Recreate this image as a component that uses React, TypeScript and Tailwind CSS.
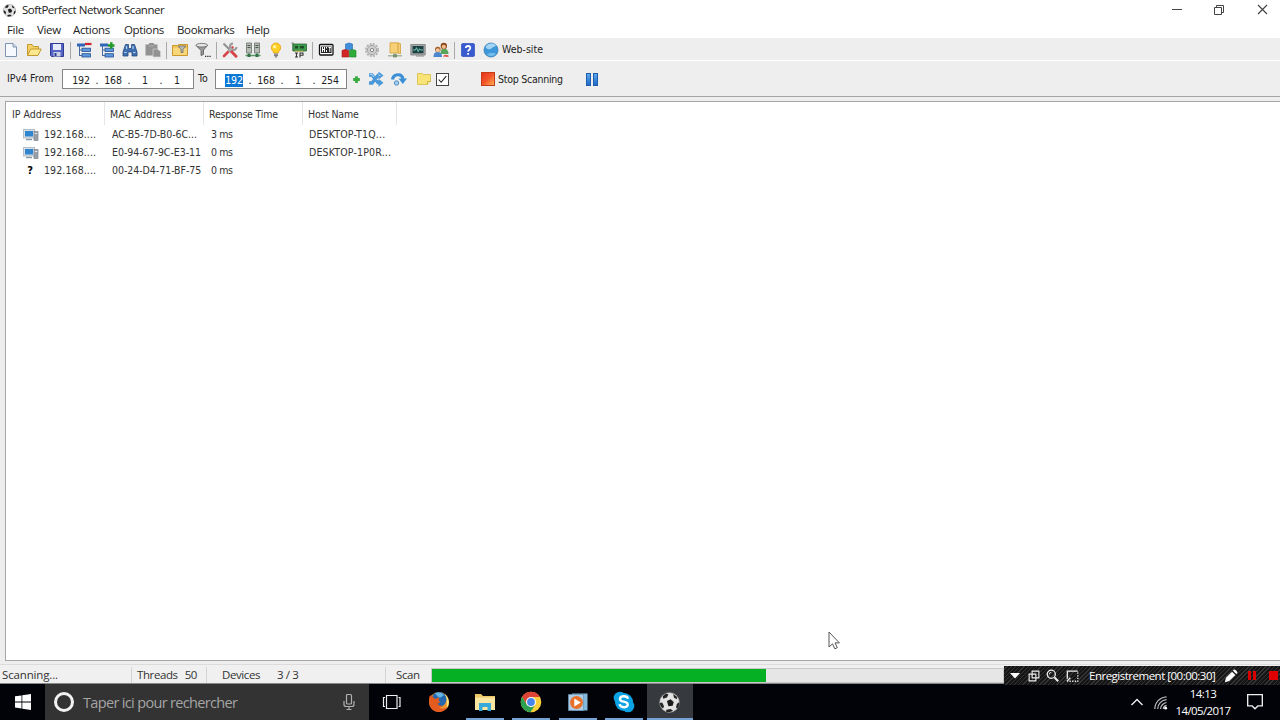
import type { ReactNode } from 'react';

type IconProps = { children: ReactNode; size?: number; className?: string };

function Icon({ children, size = 16, className = '' }: IconProps) {
  return (
    <svg viewBox="0 0 16 16" width={size} height={size} fill="none" className={`shrink-0 ${className}`}>
      {children}
    </svg>
  );
}

const tree = (
  <>
    <path d="M3.5 4v10M3.5 8h3M3.5 13.5h3" stroke="#4a6a9c" />
    <rect x="1" y="1.5" width="8" height="3" fill="#2f66b8" />
    <rect x="6" y="6.2" width="8.500" height="3.300" fill="#5e98dc" stroke="#244f93" strokeWidth=".8" />
    <rect x="6" y="11.700" width="8.500" height="3.300" fill="#5e98dc" stroke="#244f93" strokeWidth=".8" />
  </>
);

const toolbar: (ReactNode | 'sep')[] = [
  <Icon key="new">
    <path d="M2.5 1.5h7.5l3.5 3.5v9.5h-11z" fill="#f6faff" stroke="#7f93b3" />
    <path d="M10 1.5v3.500h3.500" fill="#cfdcf0" stroke="#7f93b3" />
  </Icon>,
  <Icon key="open">
    <path d="M1.5 13.5v-11h4.500l1.500 2h5v3" fill="#f4d268" stroke="#c29a2c" />
    <path d="M1.5 13.5l3.200-6.500h10.500l-3.200 6.500z" fill="#fce68e" stroke="#c29a2c" />
  </Icon>,
  <Icon key="save">
    <path d="M1.5 1.5h13v13h-12l-1-1z" fill="#5463c4" stroke="#2f3a93" />
    <rect x="4" y="2" width="8" height="6" fill="#e6ecfb" />
    <rect x="4.5" y="10" width="7" height="4.5" fill="#c9cfe4" />
    <rect x="5.5" y="11" width="2" height="3" fill="#2f3a93" />
  </Icon>,
  'sep',
  <Icon key="collapse">
    {tree}
    <path d="M9 2h6.500" stroke="#cf2430" strokeWidth="2.200" />
  </Icon>,
  <Icon key="expand">
    {tree}
    <path d="M9 3.500h6.500M12.300 .3v6.500" stroke="#1f9a26" strokeWidth="2.400" />
  </Icon>,
  <Icon key="find">
    <path d="M3.500 2.500h3v4h3v-4h3l2.500 7.500v4h-5v-4h-4v4h-5v-4z" fill="#3d6eaf" stroke="#27497d" strokeWidth=".8" />
    <path d="M2.200 10.500h2.500M11 10.500h2.500M4.500 4v3M11 4v3" stroke="#b8d3f2" strokeWidth="1.200" />
  </Icon>,
  <Icon key="paste">
    <path d="M.5 2.500h3l1-1.500h4l1 1.500h3v11h-12z" fill="#929292" />
    <path d="M8 7h4.500l3 2.500v5.500h-7.500z" fill="#929292" stroke="#d5d5d5" strokeWidth=".7" />
    <path d="M4 4h5" stroke="#b0b0b0" />
  </Icon>,
  'sep',
  <Icon key="folder-filter">
    <path d="M.5 3.500h5l1-1h9v11h-15z" fill="#f3c75e" stroke="#c9982b" />
    <path d="M1 6h14v7h-14z" fill="#f8d67a" />
    <path d="M6 4h8l-3 3.300v3.200h-2v-3.200z" fill="#b9b9b9" stroke="#6c6c6c" strokeWidth=".8" />
  </Icon>,
  <Icon key="filter">
    <path d="M1 3.500l5 5v5l2.500-1v-4.500l4-4.500z" fill="#9a9a9a" stroke="#555" strokeWidth=".8" />
    <ellipse cx="6.800" cy="3.200" rx="5.800" ry="1.800" fill="#e4e4e4" stroke="#666" strokeWidth=".8" />
    <path d="M10 14.300h1.300M12.200 14.300h1.300M14.400 14.300h1.300" stroke="#333" strokeWidth="1.200" />
  </Icon>,
  'sep',
  <Icon key="tools">
    <path d="M2 14l8.500-8.500" stroke="#d6454a" strokeWidth="2.600" strokeLinecap="round" />
    <path d="M11 1.500a3.300 3.300 0 1 0 3.500 3.500" stroke="#9a9a9a" strokeWidth="2" />
    <path d="M1.500 1.500l6.500 6.500" stroke="#909090" strokeWidth="2" />
    <path d="M8.500 8.500l5.500 5.700" stroke="#d6454a" strokeWidth="3" strokeLinecap="round" />
    <path d="M6.500 9.500l3.500-3.500" stroke="#a8a8a8" strokeWidth="2.600" />
  </Icon>,
  <Icon key="servers">
    <path d="M1.500 1h5v10h-5zM9.500 1h5v10h-5z" fill="#b6bcb6" stroke="#757c75" strokeWidth=".9" />
    <path d="M2.500 3.500h3M2.500 5.500h3M10.500 3.500h3M10.500 5.500h3" stroke="#505850" />
    <path d="M.5 13.500h15M4 11v2M12 11v2" stroke="#5d9a67" strokeWidth="1.400" />
    <path d="M2.500 13.500h3M10.500 13.500h3" stroke="#34704a" strokeWidth="3" />
  </Icon>,
  <Icon key="bulb">
    <path d="M8 1a4.700 4.700 0 0 1 4.700 4.700c0 2.300-2.200 3.300-2.400 5.300h-4.600c-.2-2-2.400-3-2.400-5.300a4.700 4.700 0 0 1 4.700-4.700z" fill="#ffcf24" stroke="#e3a012" strokeWidth=".8" />
    <circle cx="6.600" cy="4.800" r="1.700" fill="#fff2a6" />
    <path d="M6 12.200h4M6 13.700h4M7 15h2" stroke="#7b7b7b" strokeWidth="1.200" />
  </Icon>,
  <Icon key="ip">
    <path d="M.5 1h1.500v8" stroke="#777" strokeWidth="1.200" />
    <path d="M2 2h13.500v7h-13.500z" fill="#3f9b4c" stroke="#276a32" strokeWidth=".8" />
    <path d="M4 4h3v2.500h-3zM9 4h4v2.500h-4z" fill="#1d4a28" />
    <path d="M4 9.200h8" stroke="#cfb95c" />
    <path d="M4 11h3M5.500 11v4M4 15h3M9 15.500v-4.500h3v2.300h-3" stroke="#333" strokeWidth="1.100" />
  </Icon>,
  'sep',
  <Icon key="host">
    <rect x="1.500" y="2.500" width="13.500" height="10.500" rx="1" fill="#fff" stroke="#111" strokeWidth="1.300" />
    <path d="M3 4.500h10.500v6.500h-10.500z" fill="#222" />
    <path d="M4.500 5v5M6.500 5v5M4.500 7.500h2M8.500 8v2M8.500 5v1.500M10.500 5.500h2.500M11.800 5.500v4.500" stroke="#fff" />
  </Icon>,
  <Icon key="cubes">
    <path d="M4.500 2l3.700-1 3.300 1v5.500h-7z" fill="#3f8fdd" stroke="#2468b5" strokeWidth=".6" />
    <path d="M1 8.500l3-1 3.800 1v6.500h-6.800z" fill="#d32525" stroke="#9d1616" strokeWidth=".6" />
    <path d="M8.500 8.500l3-1 3.500 1v6.500h-6.500z" fill="#2eac3a" stroke="#1a7d25" strokeWidth=".6" />
  </Icon>,
  <Icon key="gear">
    <circle cx="8" cy="8" r="6" stroke="#b2b2b2" strokeWidth="2" strokeDasharray="2 1.140" />
    <circle cx="8" cy="8" r="4.600" fill="#cfcfcf" stroke="#a2a2a2" />
    <circle cx="8" cy="8" r="1.700" fill="#efefef" stroke="#888" />
  </Icon>,
  <Icon key="shared">
    <path d="M3 .8h8l2.500 1v10l-2.500-.8h-8z" fill="#f7cf76" stroke="#d2a03a" strokeWidth=".8" />
    <path d="M11 1v10" stroke="#d2a03a" />
    <path d="M1 13.800h14M8 11v2" stroke="#a9b79c" strokeWidth="1.500" />
    <path d="M6 13.800h4" stroke="#77906c" strokeWidth="3" />
  </Icon>,
  <Icon key="monitor">
    <path d="M.8 2.500h14.400v10.500h-14.400z" fill="#a7acac" stroke="#777" strokeWidth=".8" />
    <path d="M2.500 4h11v7.300h-11z" fill="#1c3f42" />
    <path d="M3 8h2.500l1-2.300 1.700 4 1.300-3 1 1.300h2.500" stroke="#7fd5c6" strokeWidth=".9" />
    <path d="M6 14h8" stroke="#888" />
  </Icon>,
  <Icon key="users">
    <path d="M7.500 12c0-4 1.500-5.500 3.500-5.500s4.500 1.500 4.500 5.500z" fill="#58a55a" />
    <circle cx="10.800" cy="4" r="3.200" fill="#8c4a20" />
    <circle cx="10.800" cy="4.800" r="2.100" fill="#f0bb8d" />
    <path d="M.5 15c0-4 1.800-5 4-5s4.500 1 4.500 5z" fill="#4b87cf" />
    <circle cx="4.800" cy="7.500" r="2.800" fill="#a35c22" />
    <circle cx="4.800" cy="8.200" r="2" fill="#f4c79d" />
    <path d="M10 14.500c1-2 3-2 5.500-1v1.500z" fill="#d9564a" />
  </Icon>,
  'sep',
  <Icon key="help">
    <rect x="1.500" y="1.500" width="13" height="13" rx="1.500" fill="#3a5bd0" stroke="#4a66c8" />
    <path d="M5.800 6c0-2.700 4.500-2.700 4.500 0 0 1.700-2.200 1.700-2.200 3.500M8.100 11v1.800" stroke="#fff" strokeWidth="1.800" />
  </Icon>,
  <Icon key="globe">
    <circle cx="8" cy="8" r="7" fill="#3e97d8" stroke="#2a74b4" strokeWidth=".7" />
    <path d="M2.500 5c2-4 8-4.500 10.500-1.500-2 2-3 1-4.500 2.800s-4.500 1.200-6-1.300z" fill="#a5d4f3" />
    <path d="M4 12.500c2-2 6-2.500 9-1-2 3-6 3.800-9 1z" fill="#70bdec" />
  </Icon>,
];

const menus = [
  { label: 'File', className: 'w-[30px]' },
  { label: 'View', className: 'w-[36px]' },
  { label: 'Actions', className: 'w-[51px]' },
  { label: 'Options', className: 'w-[53px]' },
  { label: 'Bookmarks', className: 'w-[69px]' },
  { label: 'Help', className: 'w-[30px]' },
];

const devices = [
  { known: true, mac: 'AC-B5-7D-B0-6C...', time: '3 ms', host: 'DESKTOP-T1Q...' },
  { known: true, mac: 'E0-94-67-9C-E3-11', time: '0 ms', host: 'DESKTOP-1P0R...' },
  { known: false, mac: '00-24-D4-71-BF-75', time: '0 ms', host: '' },
];

function Ball({ size }: { size: number }) {
  return (
    <svg viewBox="0 0 20 20" width={size} height={size} className="shrink-0">
      <circle cx="10" cy="10" r="9.500" fill="#e2e2e2" stroke="#777" strokeWidth=".6" />
      <path d="M7.500 8.500l3.500-1.500 3 2.500-1 3.500-4 .5z" fill="#1b1b1b" />
      <path d="M3.500 4l3-2.500 2.500.8-1.500 3-3.500 1.200zM13.500 2l3.500 2.500.3 2.500-3-1.500zM.7 10.500l2.300-.5 1.800 3.500-1 2.200c-1.800-1.200-2.800-3-3.100-5.200zM7 17l4-.8 2.300 1.500c-2 1.700-4.800 1.700-6.600 1zM17 11.500l2.200-2c.4 2.300-.4 4.700-1.800 6.200l-1.200-1z" fill="#252525" />
    </svg>
  );
}

function AddressInput({ octets, selected }: { octets: string[]; selected?: boolean }) {
  return (
    <div className="flex h-[20px] w-[132px] items-center border border-[#858585] bg-white pt-[2px] pl-px tracking-[-0.15px]">
      {octets.map((octet, i) => (
        <div key={i} className="flex items-center">
          <span className="flex w-[34px] justify-center">
            <span className={selected && i === 0 ? 'bg-[#0b78d6] leading-[13px] text-white' : 'leading-[13px]'}>{octet}</span>
          </span>
          {i < 3 && <span className="-mx-[3px] w-[4px] text-center leading-[13px]">.</span>}
        </div>
      ))}
    </div>
  );
}

function ComputerIcon() {
  return (
    <Icon className="-ml-[4px]">
      <rect x=".5" y="2.500" width="11" height="8.500" fill="#d7e0e8" stroke="#b4bec8" />
      <rect x="2" y="4" width="8" height="5.500" fill="#2f86ce" />
      <path d="M3 12.500h6" stroke="#8c98a3" strokeWidth="1.500" />
      <rect x="11" y="4.500" width="4" height="9" fill="#9aa0a6" stroke="#7d858d" strokeWidth=".7" />
      <path d="M11.800 6.500h2.500" stroke="#e5e9ee" />
    </Icon>
  );
}

function ScanBar() {
  return (
    <div className="flex h-[36px] items-center border-t border-white pt-px pl-[7px] font-[Tahoma,'DejaVu_Sans_Condensed',sans-serif] text-[10.5px] text-[#222]">
      <span className="w-[55px] whitespace-nowrap">IPv4 From</span>
      <AddressInput octets={['192', '168', '1', '1']} />
      <span className="w-[21px] pl-[4px]">To</span>
      <AddressInput octets={['192', '168', '1', '254']} selected />
      <div className="flex w-[18px] justify-center">
        <Icon size={9}>
          <path d="M8 2v12M2 8h12" stroke="#3bab40" strokeWidth="5" />
        </Icon>
      </div>
      <Icon className="ml-[3px]">
        <path d="M1 4h3l6 7.500h2M1 12h3l6-7.500h2" stroke="#4a98d8" strokeWidth="3.400" />
        <path d="M10.500 .5l5 4-5 4zM10.500 7.800l5 4-5 4z" fill="#4a98d8" />
        <path d="M1.500 3.500h2.500l2 2.500M10.500 4.300h2" stroke="#a7d2f3" strokeWidth="1.200" />
      </Icon>
      <Icon className="ml-[7px]">
        <path d="M1.500 8.500c1-6 9.500-6.500 10.500-.5" stroke="#3b8fd6" strokeWidth="3.200" />
        <path d="M7.500 7.500h8.500l-4.200 5.500z" fill="#3b8fd6" />
        <circle cx="5.500" cy="12" r="2.200" fill="#a8cdec" stroke="#4c90c9" />
      </Icon>
      <Icon className="ml-[9px]">
        <path d="M1.500 2.500h5l1 1h7v7l-3 3h-10z" fill="#f8e377" stroke="#dcc35a" />
        <path d="M11.500 13.500v-3h3" fill="#fff5b8" stroke="#cfb244" />
      </Icon>
      <div className="ml-[4px] flex size-[13px] items-center justify-center border border-[#444] bg-white">
        <Icon size={11}>
          <path d="M2.500 8l3.500 4 7.500-9" stroke="#222" strokeWidth="1.600" />
        </Icon>
      </div>
      <div className="ml-[32px] size-[14px] border border-[#c53a19] bg-linear-to-br from-[#e8331c] via-[#f2542a] to-[#ffad55]" />
      <span className="ml-[3px] w-[88px] pt-px tracking-[-0.25px] whitespace-nowrap">Stop Scanning</span>
      <div className="flex gap-[2px]">
        <div className="h-[13px] w-[5px] border border-[#1f5eae] bg-linear-to-b from-[#5ca8ec] to-[#1d6cc8]" />
        <div className="h-[13px] w-[5px] border border-[#1f5eae] bg-linear-to-b from-[#5ca8ec] to-[#1d6cc8]" />
      </div>
    </div>
  );
}

function DeviceList() {
  return (
    <div className="ml-[5px] h-[560px] border border-r-0 border-[#a5a5a5] bg-white font-[Tahoma,'DejaVu_Sans_Condensed',sans-serif] text-[10.5px] text-[#333]">
      <div className="mb-px flex h-[23px] items-center *:h-full *:border-r *:border-[#e5e5e5] *:pt-[4px] *:leading-[16px]">
        <span className="w-[99px] pl-[6px]">IP Address</span>
        <span className="w-[99px] pl-[5px]">MAC Address</span>
        <span className="w-[99px] pl-[5px] tracking-[-0.2px]">Response Time</span>
        <span className="w-[94px] pl-[5px] tracking-[-0.2px]">Host Name</span>
      </div>
      {devices.map((device) => (
        <div key={device.mac} className="flex h-[18px] items-center pl-[16px] whitespace-nowrap">
          <span className="flex w-[22px] justify-center">
            {device.known ? <ComputerIcon /> : <b className="pr-[6px] text-[11px] text-black">?</b>}
          </span>
          <span className="w-[68px] tracking-[0.1px]">192.168....</span>
          <span className="w-[99px] tracking-[-0.04px]">{device.mac}</span>
          <span className="w-[98px] tracking-[-0.4px]">{device.time}</span>
          <span className="tracking-[0.17px]">{device.host}</span>
        </div>
      ))}
    </div>
  );
}

function StatusBar() {
  return (
    <div className="mt-[3px] flex h-[20px] items-center border-t border-b border-t-[#dcdcdc] border-b-[#888] bg-[#f0f0f0] pt-[2px] text-[11.5px] leading-[16px] tracking-[-0.4px] text-[#333] *:shrink-0">
      <span className="w-[132px] border-r border-[#d4d4d4] pl-[2px] tracking-[-0.15px]">Scanning...</span>
      <span className="w-[75px] border-r border-[#d4d4d4] pl-[5px]">
        Threads<span className="ml-[7px]">50</span>
      </span>
      <span className="w-[179px] border-r border-[#d4d4d4] pl-[15px]">
        Devices<span className="ml-[17px]">3 / 3</span>
      </span>
      <span className="w-[45px] pl-[10px]">Scan</span>
      <div className="h-[15px] w-[573px] border border-[#c8c8c8] bg-[#e6e6e6]">
        <div className="h-full w-[334px] bg-[#06b025]" />
      </div>
    </div>
  );
}

function RecorderBar() {
  return (
    <div className="absolute top-[666px] right-0 flex h-[19px] w-[276px] items-center bg-[repeating-linear-gradient(135deg,#151515_0_2px,#343434_2px_3px)] text-white *:shrink-0">
      <svg viewBox="0 0 10 6" width="10" height="6" className="ml-[6px]">
        <path d="M0 0h10l-5 5.500z" fill="#fff" />
      </svg>
      <Icon size={12} className="ml-[8px]">
        <path d="M5.500 1.500h9v9h-9zM1.500 5.500h9v9h-9z" stroke="#eee" strokeWidth="1.500" />
      </Icon>
      <Icon size={13} className="ml-[6px]">
        <circle cx="6.500" cy="6.500" r="5" stroke="#eee" strokeWidth="1.600" />
        <path d="M4 6.500a2.500 2.500 0 0 1 2.500-2.500" stroke="#eee" />
        <path d="M10.500 10.500l4.500 4.500" stroke="#eee" strokeWidth="2.500" />
      </Icon>
      <Icon size={14} className="ml-[7px]">
        <path d="M1.500 11v-8.500h12" stroke="#eee" strokeWidth="1.500" />
        <path d="M13.500 4v10h-12" stroke="#eee" strokeWidth="1.500" strokeDasharray="1.500 1.500" />
        <path d="M1 14l4-4" stroke="#eee" strokeWidth="1.500" />
      </Icon>
      <span className="ml-[9px] w-[135px] pt-px text-[11.5px] tracking-[-0.5px] whitespace-nowrap">Enregistrement [00:00:30]</span>
      <Icon size={14}>
        <path d="M1 15l1.200-5 7-7 3.800 3.800-7 7zM10.200 2l1.300-1.300c.8-.8 4.600 3 3.800 3.800l-1.300 1.300z" fill="#fff" />
      </Icon>
      <div className="ml-[10px] flex gap-[2px]">
        <div className="h-[9px] w-[3px] bg-[#d80000]" />
        <div className="h-[9px] w-[3px] bg-[#d80000]" />
      </div>
      <div className="ml-[13px] size-[9px] bg-[#e00000]" />
    </div>
  );
}

const apps = [
  {
    name: 'firefox',
    running: false,
    icon: (
      <svg viewBox="0 0 22 22" width="22" height="22">
        <circle cx="11" cy="11" r="10" fill="#f0982e" />
        <path d="M16 2.500a10.500 10.500 0 0 1 2.500 15.500c1-5 0-11-2.500-15.500z" fill="#ffe27a" />
        <circle cx="11" cy="8.500" r="7.500" fill="#2668ae" />
        <path d="M7 2.500c4-2 8-1 9 2-2 0-2 2-4 2s-3-2-5-4z" fill="#64b5e6" />
        <path d="M2 4c-2 5-1.500 17 9 17 4 0 7.500-2.500 9-6-3 3-7 3-9 1.500 2 0 3-1 3.500-2-3 .5-4.500-.5-5-2 1 0 2.500-1 3-2-2.500 0-2-2.500-1-3.500-1.500-.5-3 0-4 1-1.500-.5-3-2-3.500-4-1 .3-1.500.8-2 1.500z" fill="#e55b1f" />
      </svg>
    ),
  },
  {
    name: 'explorer',
    running: true,
    icon: (
      <svg viewBox="0 0 22 20" width="22" height="20">
        <path d="M1 2h6l2 2h12v14h-20z" fill="#edc868" />
        <path d="M1 5.500h20v12.500h-20z" fill="#fae6a0" />
        <path d="M5 11h12v8h-3.500v-4h-5v4h-3.500z" fill="#38a9d9" />
      </svg>
    ),
  },
  {
    name: 'chrome',
    running: true,
    icon: (
      <svg viewBox="0 0 22 22" width="22" height="22">
        <circle cx="11" cy="11" r="10.300" fill="#fbcf3b" />
        <path d="M2.100 5.800a10.300 10.300 0 0 1 17.900.2h-9v5l-4.300 2.500z" fill="#de4436" />
        <path d="M2.100 5.800l4.600 7.700 4.300 2.500 3.500-1-4 6.300a10.300 10.300 0 0 1-8.400-15.500z" fill="#2da14f" />
        <circle cx="11" cy="11" r="5" fill="#fff" />
        <circle cx="11" cy="11" r="3.900" fill="#4786ee" />
      </svg>
    ),
  },
  {
    name: 'media',
    running: true,
    icon: (
      <svg viewBox="0 0 22 22" width="22" height="22">
        <path d="M5 2.500h15.500v17h-15.500z" fill="#82b8dc" />
        <path d="M1.500 3.500h15v16h-15z" fill="#aecde4" stroke="#6595b8" strokeWidth=".7" />
        <circle cx="9.500" cy="11.500" r="6.500" fill="#e8702a" />
        <path d="M7.300 7.500l6.500 4-6.500 4z" fill="#fff" />
      </svg>
    ),
  },
  {
    name: 'skype',
    running: true,
    icon: (
      <svg viewBox="0 0 22 22" width="22" height="22">
        <circle cx="7" cy="7" r="6.300" fill="#0ba3e4" />
        <circle cx="15" cy="15" r="6.300" fill="#0ba3e4" />
        <circle cx="11" cy="11" r="9" fill="#0ba3e4" />
        <path d="M15 7.700c-.5-2-2.200-2.500-4-2.500-5 0-5 4.300-1.500 5.200l3 .8c3.700 1 2.500 5-1.500 5-2.200 0-4-.8-4.300-3" stroke="#fff" strokeWidth="2.400" fill="none" />
      </svg>
    ),
  },
];

function Taskbar() {
  return (
    <div className="flex h-[36px] items-center bg-[#020308] text-white">
      <div className="flex w-[45px] justify-center">
        <Icon>
          <path d="M0 2.300l6.500-.9v6.100h-6.500zM7.300 1.300l8.700-1.300v7.500h-8.700zM0 8.400h6.500v6.100l-6.500-.9zM7.300 8.400h8.700v7.600l-8.700-1.300z" fill="#fff" />
        </Icon>
      </div>
      <div className="flex h-full w-[324px] items-center bg-[#333] pl-[9px]">
        <div className="size-[20px] shrink-0 rounded-full border-[3px] border-[#f2f2f2]" />
        <span className="ml-[9px] w-[259px] pt-px text-[14.5px] tracking-[-0.66px] text-[#a5a5a5]">Taper ici pour rechercher</span>
        <svg viewBox="0 0 14 18" width="14" height="18" fill="none" stroke="#b0b0b0" strokeWidth="1.200">
          <rect x="4.500" y="1.500" width="5" height="9.500" rx="1" />
          <path d="M2 8v3.500c0 1.500 1 2 2.500 2h5c1.500 0 2.500-.5 2.500-2v-3.500M7 13.500v3M4.500 16.500h5" />
        </svg>
      </div>
      <div className="flex w-[47px] justify-center pr-[2px]">
        <svg viewBox="0 0 20 16" width="20" height="16" fill="none" stroke="#eee" strokeWidth="1.200">
          <path d="M4.500 1.500h10.500v13h-10.500zM3 3.500h-1.500v9h1.500M16.500 3.500h1.500v9h-1.500" />
        </svg>
      </div>
      {apps.map((app) => (
        <div key={app.name} className="flex h-full w-[46.2px] flex-col items-center justify-between">
          <div className="flex h-[34px] items-center pt-[2px]">{app.icon}</div>
          {app.running && <div className="h-[2px] w-[38px] bg-[#76a3d6]" />}
        </div>
      ))}
      <div className="flex h-full w-[46px] flex-col items-center justify-between bg-[#36393e]">
        <div className="flex h-[34px] items-center pt-[2px]">
          <Ball size={21} />
        </div>
        <div className="h-[2px] w-full bg-[#76a3d6]" />
      </div>
      <div className="ml-auto flex items-center">
        <svg viewBox="0 0 14 8" width="14" height="8" fill="none" stroke="#eee" strokeWidth="1.400">
          <path d="M1.500 7l5.500-5.500 5.500 5.500" />
        </svg>
        <Icon size={15} className="ml-[9px]">
          <path d="M2 15c0-7 5-12.500 12.500-13M5 15c0-5.500 4-9.500 9.500-10M8 15c0-3.500 3-6.500 6.500-7M11 15c0-2 1.500-3.500 3.500-4" stroke="#bbb" strokeWidth="1.300" />
          <circle cx="13.500" cy="14" r="1.500" fill="#fff" />
        </Icon>
        <div className="ml-[5px] flex w-[60px] flex-col items-center text-[11.5px] leading-[17px] tracking-[-0.6px]">
          <span>14:13</span>
          <span>14/05/2017</span>
        </div>
        <Icon size={18} className="mr-[16px] ml-[13px]">
          <path d="M1.500 1.500h13v10h-4l-2.500 2.500-2.500-2.500h-4z" stroke="#eee" strokeWidth="1.200" />
        </Icon>
      </div>
    </div>
  );
}

export default function App() {
  return (
    <div className="relative h-[720px] w-[1280px] overflow-hidden bg-[#eee] font-['Segoe_UI','Open_Sans',sans-serif]">
      <div className="flex h-[20px] items-center bg-white pl-[3px]">
        <Ball size={13} />
        <span className="ml-[6px] text-[11.5px] tracking-[-0.45px] text-[#222]">SoftPerfect Network Scanner</span>
        <svg viewBox="0 0 110 14" width="110" height="14" fill="none" stroke="#444" className="mr-[7px] mb-[2px] ml-auto">
          <path d="M9 7.500h10" />
          <path d="M51.500 5.500h7v7h-7zM53.500 5v-1.500h7v7h-1.500" />
          <path d="M95 3l9 9M104 3l-9 9" strokeWidth="1.200" />
        </svg>
      </div>
      <div className="flex h-[18px] items-center bg-white pt-[2px] pl-[7px] text-[11.5px] tracking-[-0.35px] text-[#222]">
        {menus.map((menu) => (
          <span key={menu.label} className={menu.className}>
            {menu.label}
          </span>
        ))}
      </div>
      <div className="-ml-px flex h-[22px] items-center pt-[2px]">
        {toolbar.map((item, i) =>
          item === 'sep' ? (
            <div key={i} className="flex w-[4px] justify-center">
              <div className="h-[17px] w-px bg-[#a8a8a8]" />
            </div>
          ) : (
            <div key={i} className="flex w-[23px] justify-center">
              {item}
            </div>
          ),
        )}
        <span className="font-[Tahoma,'DejaVu_Sans_Condensed',sans-serif] text-[10.5px] text-[#222]">Web-site</span>
      </div>
      <ScanBar />
      <div className="mb-[4px] h-px bg-[#a5a5a5]" />
      <DeviceList />
      <StatusBar />
      <Taskbar />
      <RecorderBar />
      <svg viewBox="0 0 12 19" width="12" height="19" className="absolute top-[631px] left-[828px]">
        <path d="M1 1v15l3.500-3.200 2.300 5 2.500-1.100-2.300-4.800h4.400z" fill="#fff" stroke="#555" />
      </svg>
    </div>
  );
}
